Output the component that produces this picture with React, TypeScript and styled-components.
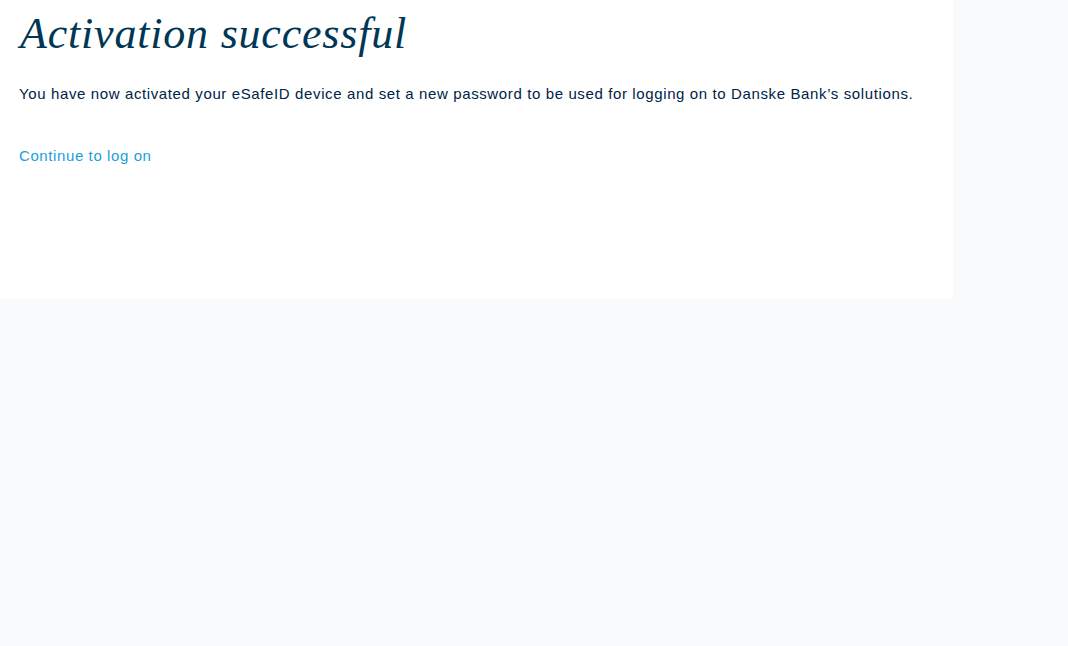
import styled, { createGlobalStyle } from 'styled-components'

const GlobalStyle = createGlobalStyle`
  html, body {
    margin: 0;
    padding: 0;
    background: #f9fafc;
  }

  body {
    font-family: 'Liberation Sans', Arial, sans-serif;
    color: #002346;
  }
`

const Page = styled.main`
  min-height: 646px;
  display: flex;
  align-items: flex-start;
`

const Panel = styled.section`
  width: 953px;
  height: 298px;
  box-sizing: border-box;
  background: #ffffff;
  padding: 9px 19px 0;
`

const Title = styled.h1`
  margin: 0 0 0 1px;
  font-family: 'Liberation Serif', 'Times New Roman', serif;
  font-style: italic;
  font-weight: 400;
  font-size: 44px;
  line-height: 50px;
  letter-spacing: 0.8px;
  color: #003755;
`

const Text = styled.p`
  margin: 23px 0 0;
  font-size: 15px;
  line-height: 24px;
  letter-spacing: 0.62px;
  color: #002346;
`

const Action = styled.a`
  display: inline-block;
  margin-top: 38px;
  font-size: 15px;
  line-height: 24px;
  letter-spacing: 0.6px;
  color: #1a9fd9;
  text-decoration: none;
  cursor: pointer;
`

export default function App() {
  return (
    <Page>
      <GlobalStyle />
      <Panel>
        <Title>Activation successful</Title>
        <Text>
          You have now activated your eSafeID device and set a new password to be used for logging on to
          Danske Bank’s solutions.
        </Text>
        <Action href="#">Continue to log on</Action>
      </Panel>
    </Page>
  )
}
